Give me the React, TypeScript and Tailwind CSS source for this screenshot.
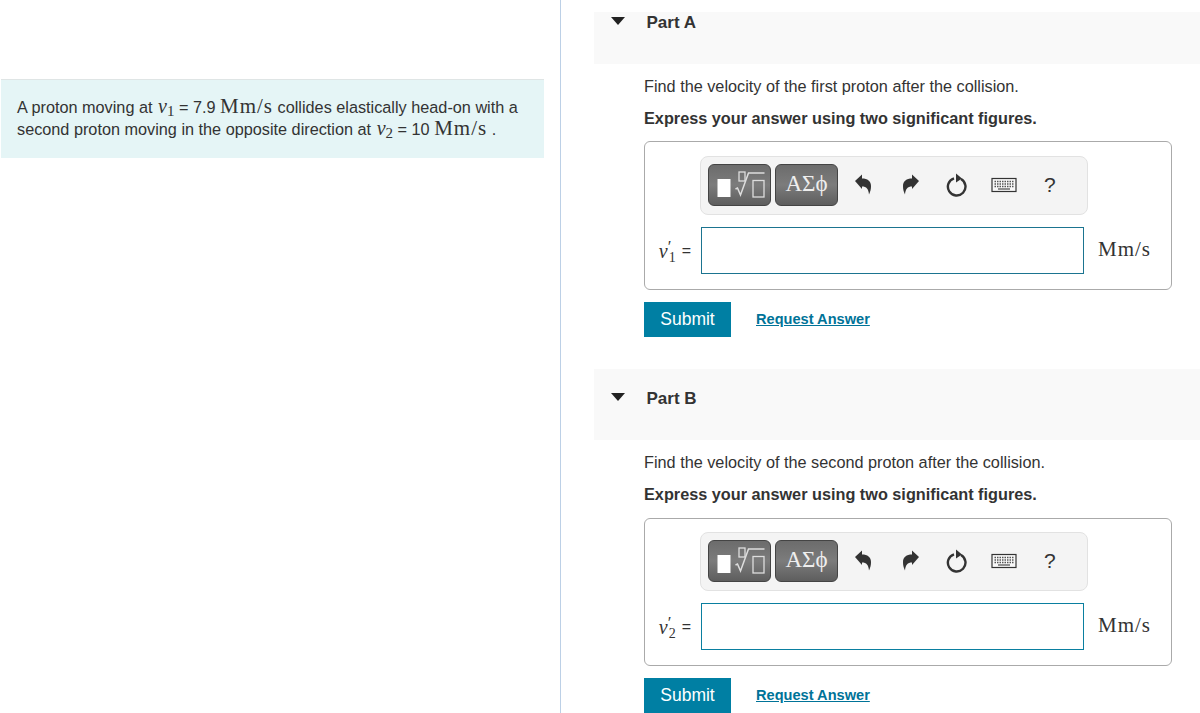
function MathUnit() {
  return <span className="font-['Liberation_Serif',serif] text-[21px] leading-[0] tracking-[1px] text-[#333]">Mm/s</span>;
}

function V({ sub }: { sub: string }) {
  return (
    <span className="ml-[1px] font-['Liberation_Serif',serif] text-[20px] leading-[0] text-[#333]">
      <i>v</i>
      <span className="relative top-[3px] text-[15px] leading-[0]">{sub}</span>
    </span>
  );
}

function MatrixIcon() {
  return (
    <svg width="56" height="32" viewBox="0 0 56 32" fill="none">
      <rect x="5.500" y="10" width="13" height="18" fill="#fff" />
      <rect x="27" y="3" width="6" height="9" stroke="#ddd" strokeWidth="1.300" />
      <path d="M23.500 20l2-1 3 7 8-22h16" stroke="#ddd" strokeWidth="1.500" />
      <rect x="41" y="11.500" width="11" height="16.500" stroke="#ddd" strokeWidth="1.300" />
    </svg>
  );
}

function ReplyIcon({ flip = false }: { flip?: boolean }) {
  return (
    <svg width="18" height="21" viewBox="0 0 18 21" className={flip ? "-scale-x-100" : ""}>
      <path d="M1 7L8 0.500v4c5.500 0 9 2.500 9 7.500 0 3-.5 5.500-2 8.500-.5-5.500-2.500-8-7-8V15z" fill="#333" />
    </svg>
  );
}

function ResetIcon() {
  return (
    <svg width="22" height="25" viewBox="0 0 22 25" fill="none">
      <path d="M8 6.300A8.800 8.800 0 1 0 15 7" stroke="#333" strokeWidth="2.400" />
      <path d="M10 1.500l6 5-6 4z" fill="#333" />
    </svg>
  );
}

function KeyboardIcon() {
  return (
    <svg width="26" height="16" viewBox="0 0 26 16" fill="none">
      <rect x="1" y="1.500" width="24" height="13" fill="#f8f8f8" stroke="#333" strokeWidth="1.200" />
      <path d="M3.500 4.500h19M3.500 7h19M3.500 9.500h19" stroke="#555" strokeWidth="1.300" strokeDasharray="1.500 1" />
      <path d="M7 12h12" stroke="#555" strokeWidth="1.300" />
    </svg>
  );
}

function Toolbar() {
  return (
    <div className="ml-[55px] flex h-[59px] w-[388px] items-center rounded-lg border border-[#e2e2e2] bg-[#f4f4f4] pb-[2px] pl-[7px]">
      <div className="flex h-[42px] w-[63px] items-center justify-center rounded-md border border-[#444] bg-linear-to-b from-[#6c6c6c] via-[#7c7c7c] to-[#5e5e5e]">
        <MatrixIcon />
      </div>
      <div className="ml-[4px] flex h-[42px] w-[63px] items-center justify-center rounded-md border border-[#444] bg-linear-to-b from-[#6c6c6c] via-[#7c7c7c] to-[#5e5e5e] font-['Liberation_Serif',serif] text-[23px] text-[#eee]">
        ΑΣϕ
      </div>
      <div className="ml-[16px] flex"><ReplyIcon /></div>
      <div className="ml-[30px] flex"><ReplyIcon flip /></div>
      <div className="ml-[26px] flex"><ResetIcon /></div>
      <div className="ml-[23px] flex"><KeyboardIcon /></div>
      <span className="ml-[27px] text-[21px] text-[#333]">?</span>
    </div>
  );
}

function Part({
  name,
  sentence,
  sub,
  headerClass,
  boxClass,
  inputClass,
}: {
  name: string;
  sentence: string;
  sub: string;
  headerClass: string;
  boxClass: string;
  inputClass: string;
}) {
  return (
    <section className="mb-[32px]">
      <div className={`flex bg-[#f9f9f9] pl-[17px] ${headerClass}`}>
        <svg className="mt-[5px]" width="14" height="8" viewBox="0 0 14 8">
          <path d="M0 0h14L7 8z" fill="#222" />
        </svg>
        <h3 className="mt-[1px] ml-[21.500px] text-[17px] leading-[20px] font-bold text-[#333]">{name}</h3>
      </div>
      <div className="pl-[50px]">
        <p className="mt-[11px] text-[16.250px] leading-[22px] text-[#333]">{sentence}</p>
        <p className="mt-[10px] text-[16.250px] leading-[22px] font-bold text-[#333]">Express your answer using two significant figures.</p>
        <div className={`w-[528px] rounded-md border border-[#aaa] ${boxClass}`}>
          <Toolbar />
          <div className="mt-[12px] flex items-center">
            <div className="flex w-[56px] items-center justify-end pr-[10px] text-[16px] whitespace-nowrap text-[#333]">
              <span className="relative font-['Liberation_Serif',serif] text-[20px] leading-none">
                <i>v</i>
                <span className="absolute top-[-3px] left-[9px] text-[17px] leading-none">′</span>
                <span className="relative top-[4px] ml-[1px] text-[14px] leading-none">{sub}</span>
              </span>
              <span className="ml-[6px]">=</span>
            </div>
            <div className={`h-[47px] w-[383px] border bg-white ${inputClass}`} />
            <span className="ml-[14px]"><MathUnit /></span>
          </div>
        </div>
        <div className="mt-[12px] flex items-center">
          <button className="h-[35px] w-[87px] bg-[#007fa3] text-[17.500px] text-white">Submit</button>
          <a className="ml-[25px] text-[14.600px] font-bold text-[#007398] underline">Request Answer</a>
        </div>
      </div>
    </section>
  );
}

export default function App() {
  return (
    <div className="flex h-[713px] overflow-hidden bg-white font-['Liberation_Sans',sans-serif]">
      <aside className="h-full w-[561px] shrink-0 border-r border-[#bcd0e6] pt-[79px] pr-[16px] pl-[1px]">
        <div className="h-[79px] border-t border-[#dfe5e5] bg-[#e5f5f6] pt-[16px] pl-[16px] text-[16.250px] leading-[22px] text-[#333]">
          A proton moving at <V sub="1" /> = 7.9 <MathUnit /> collides elastically head-on with a
          <br />
          second proton moving in the opposite direction at <V sub="2" /> = 10 <MathUnit /> .
        </div>
      </aside>
      <main className="min-w-0 flex-1 pt-[12px] pl-[33px]">
        <Part
          name="Part A"
          sentence="Find the velocity of the first proton after the collision."
          sub="1"
          headerClass="h-[52px]"
          boxClass="mt-[12px] h-[149px] pt-[14px]"
          inputClass="border-[#1b7490]"
        />
        <Part
          name="Part B"
          sentence="Find the velocity of the second proton after the collision."
          sub="2"
          headerClass="h-[71px] pt-[19px]"
          boxClass="mt-[13px] h-[148px] pt-[13px]"
          inputClass="border-[#0a7fa0]"
        />
      </main>
    </div>
  );
}
